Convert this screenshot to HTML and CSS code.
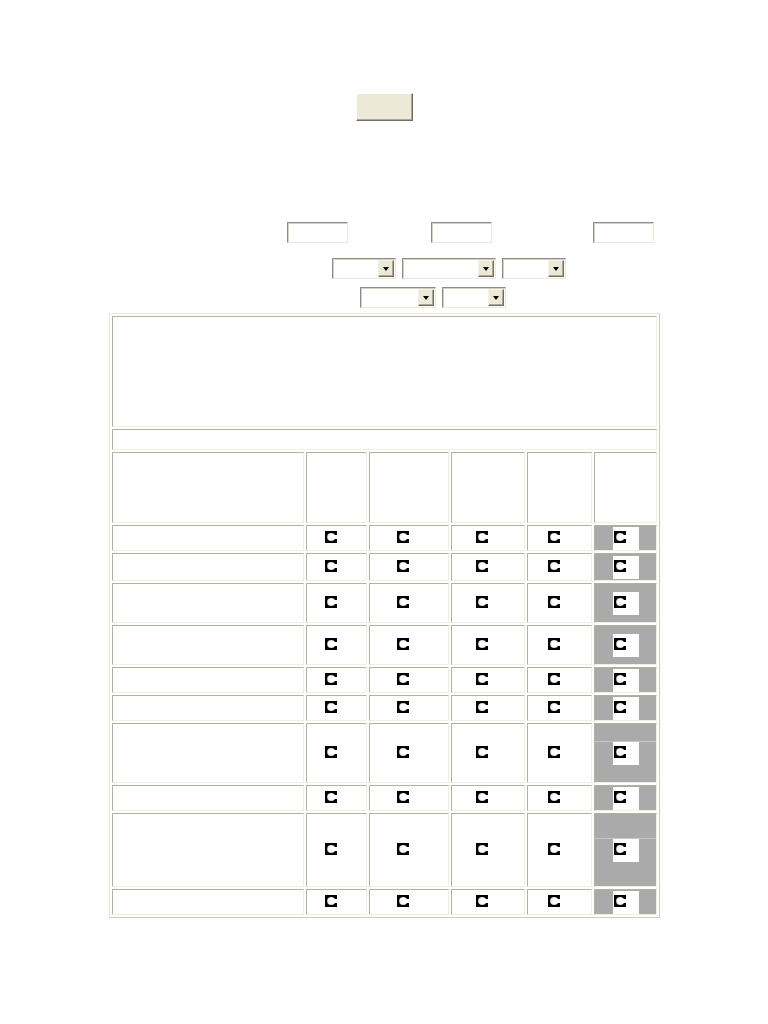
FILE: index.html
```html
<!DOCTYPE html>
<html>
<head>
<meta charset="utf-8">
<title>Form</title>
<link rel="stylesheet" href="styles.css">
</head>
<body>
<svg class="defs" width="0" height="0" aria-hidden="true">
  <defs>
    <symbol id="radio" viewBox="0 0 12 12">
      <rect width="12" height="12" fill="#000"/>
      <circle cx="6.2" cy="6" r="4.1" fill="#d8d8d8"/>
      <circle cx="6.4" cy="6" r="3.3" fill="#fff"/>
      <rect x="9" y="4" width="3" height="4" fill="#fff"/>
    </symbol>
  </defs>
</svg>

<div class="btn-row"><button class="btn" type="button"></button></div>

<div class="input-row">
  <span class="field"></span>
  <span class="field f2"></span>
  <span class="field f3"></span>
</div>

<div class="sel-row r1">
  <span class="sel w64"><span class="drop"><span class="tri"></span></span></span>
  <span class="sel w94"><span class="drop"><span class="tri"></span></span></span>
  <span class="sel w64"><span class="drop"><span class="tri"></span></span></span>
</div>
<div class="sel-row r2">
  <span class="sel w76"><span class="drop"><span class="tri"></span></span></span>
  <span class="sel w64"><span class="drop"><span class="tri"></span></span></span>
</div>

<table class="grid">
  <tr class="h111"><td colspan="6"></td></tr>
  <tr class="h21"><td colspan="6"></td></tr>
  <tr class="h71">
    <td class="c1"></td><td class="c2"></td><td class="c3"></td><td class="c4"></td><td class="c5"></td><td class="c6"></td>
  </tr>
  <tr class="h26">
    <td></td>
    <td><div class="rb"><svg class="rd"><use href="#radio"/></svg></div></td>
    <td><div class="rb"><svg class="rd"><use href="#radio"/></svg></div></td>
    <td><div class="rb"><svg class="rd"><use href="#radio"/></svg></div></td>
    <td><div class="rb"><svg class="rd"><use href="#radio"/></svg></div></td>
    <td class="gray"><div class="rb"><svg class="rd"><use href="#radio"/></svg></div></td>
  </tr>
  <tr class="h28">
    <td></td>
    <td><div class="rb"><svg class="rd"><use href="#radio"/></svg></div></td>
    <td><div class="rb"><svg class="rd"><use href="#radio"/></svg></div></td>
    <td><div class="rb"><svg class="rd"><use href="#radio"/></svg></div></td>
    <td><div class="rb"><svg class="rd"><use href="#radio"/></svg></div></td>
    <td class="gray"><div class="rb"><svg class="rd"><use href="#radio"/></svg></div></td>
  </tr>
  <tr class="h40">
    <td></td>
    <td><div class="rb"><svg class="rd"><use href="#radio"/></svg></div></td>
    <td><div class="rb"><svg class="rd"><use href="#radio"/></svg></div></td>
    <td><div class="rb"><svg class="rd"><use href="#radio"/></svg></div></td>
    <td><div class="rb"><svg class="rd"><use href="#radio"/></svg></div></td>
    <td class="gray"><div class="rb"><svg class="rd"><use href="#radio"/></svg></div></td>
  </tr>
  <tr class="h40">
    <td></td>
    <td><div class="rb"><svg class="rd"><use href="#radio"/></svg></div></td>
    <td><div class="rb"><svg class="rd"><use href="#radio"/></svg></div></td>
    <td><div class="rb"><svg class="rd"><use href="#radio"/></svg></div></td>
    <td><div class="rb"><svg class="rd"><use href="#radio"/></svg></div></td>
    <td class="gray"><div class="rb"><svg class="rd"><use href="#radio"/></svg></div></td>
  </tr>
  <tr class="h26">
    <td></td>
    <td><div class="rb"><svg class="rd"><use href="#radio"/></svg></div></td>
    <td><div class="rb"><svg class="rd"><use href="#radio"/></svg></div></td>
    <td><div class="rb"><svg class="rd"><use href="#radio"/></svg></div></td>
    <td><div class="rb"><svg class="rd"><use href="#radio"/></svg></div></td>
    <td class="gray"><div class="rb"><svg class="rd"><use href="#radio"/></svg></div></td>
  </tr>
  <tr class="h26">
    <td></td>
    <td><div class="rb"><svg class="rd"><use href="#radio"/></svg></div></td>
    <td><div class="rb"><svg class="rd"><use href="#radio"/></svg></div></td>
    <td><div class="rb"><svg class="rd"><use href="#radio"/></svg></div></td>
    <td><div class="rb"><svg class="rd"><use href="#radio"/></svg></div></td>
    <td class="gray"><div class="rb"><svg class="rd"><use href="#radio"/></svg></div></td>
  </tr>
  <tr class="h60">
    <td></td>
    <td><div class="rb"><svg class="rd"><use href="#radio"/></svg></div></td>
    <td><div class="rb"><svg class="rd"><use href="#radio"/></svg></div></td>
    <td><div class="rb"><svg class="rd"><use href="#radio"/></svg></div></td>
    <td><div class="rb"><svg class="rd"><use href="#radio"/></svg></div></td>
    <td class="gray"><div class="line"><div class="rb"><svg class="rd"><use href="#radio"/></svg></div></div></td>
  </tr>
  <tr class="h26">
    <td></td>
    <td><div class="rb"><svg class="rd"><use href="#radio"/></svg></div></td>
    <td><div class="rb"><svg class="rd"><use href="#radio"/></svg></div></td>
    <td><div class="rb"><svg class="rd"><use href="#radio"/></svg></div></td>
    <td><div class="rb"><svg class="rd"><use href="#radio"/></svg></div></td>
    <td class="gray"><div class="rb"><svg class="rd"><use href="#radio"/></svg></div></td>
  </tr>
  <tr class="h74">
    <td></td>
    <td><div class="rb"><svg class="rd"><use href="#radio"/></svg></div></td>
    <td><div class="rb"><svg class="rd"><use href="#radio"/></svg></div></td>
    <td><div class="rb"><svg class="rd"><use href="#radio"/></svg></div></td>
    <td><div class="rb"><svg class="rd"><use href="#radio"/></svg></div></td>
    <td class="gray"><div class="line"><div class="rb"><svg class="rd"><use href="#radio"/></svg></div></div></td>
  </tr>
  <tr class="h26">
    <td></td>
    <td><div class="rb"><svg class="rd"><use href="#radio"/></svg></div></td>
    <td><div class="rb"><svg class="rd"><use href="#radio"/></svg></div></td>
    <td><div class="rb"><svg class="rd"><use href="#radio"/></svg></div></td>
    <td><div class="rb"><svg class="rd"><use href="#radio"/></svg></div></td>
    <td class="gray"><div class="rb"><svg class="rd"><use href="#radio"/></svg></div></td>
  </tr>
</table>
</body>
</html>
```

FILE: styles.css
```css
html, body {
  background: #ffffff;
}
body {
  margin: 8px;
  font-family: "Liberation Sans", Arial, sans-serif;
  font-size: 13px;
}
.defs {
  position: absolute;
  width: 0;
  height: 0;
  overflow: hidden;
}

.btn-row {
  display: flex;
  justify-content: center;
  padding-top: 85px;
}
.btn {
  width: 57px;
  height: 28px;
  margin: 0;
  padding: 0;
  background: #ece9d8;
  border: 1px solid;
  border-color: #ffffff #716f64 #716f64 #ffffff;
  box-shadow: inset -1px -1px 0 #aca899;
  display: block;
}

.input-row {
  display: flex;
  margin-top: 101px;
  padding-left: 279px;
}
.field {
  display: block;
  box-sizing: border-box;
  width: 61px;
  height: 21px;
  background: #fff;
  border: 1px solid;
  border-color: #8e8d85 #ece9d8 #ece9d8 #8e8d85;
  box-shadow: inset 1px 1px 0 #d4d0c8;
}
.f2 { margin-left: 83px; }
.f3 { margin-left: 101px; }

.sel-row {
  display: flex;
  gap: 6px;
}
.sel-row.r1 {
  margin-top: 15px;
  padding-left: 324px;
}
.sel-row.r2 {
  margin-top: 8px;
  padding-left: 352px;
}
.sel {
  display: flex;
  justify-content: flex-end;
  box-sizing: border-box;
  height: 21px;
  padding: 1px;
  background: #fff;
  border: 1px solid;
  border-color: #8e8d85 #ece9d8 #ece9d8 #8e8d85;
  box-shadow: inset 1px 1px 0 #d4d0c8;
}
.w64 { width: 64px; }
.w76 { width: 76px; }
.w94 { width: 94px; }
.drop {
  display: flex;
  align-items: center;
  justify-content: center;
  box-sizing: border-box;
  width: 16px;
  height: 17px;
  background: #ece9d8;
  border: 1px solid;
  border-color: #f4f2e8 #716f64 #716f64 #f4f2e8;
  box-shadow: inset -1px -1px 0 #aca899;
}
.tri {
  width: 0;
  height: 0;
  border-left: 3.5px solid transparent;
  border-right: 3.5px solid transparent;
  border-top: 4px solid #000;
  margin-top: 1px;
}

.grid {
  margin-top: 5px;
  margin-left: 101px;
  width: 551px;
  border-collapse: separate;
  border-spacing: 2px;
  border: 1px solid;
  border-color: #ece9d8 #cfccbd #cfccbd #ece9d8;
}
.grid td {
  box-sizing: border-box;
  padding: 0;
  border: 1px solid;
  border-color: #b4b1a3 #f1efe2 #f1efe2 #b4b1a3;
  vertical-align: middle;
}
.grid .c1 { width: 192px; }
.grid .c2 { width: 61px; }
.grid .c3 { width: 80px; }
.grid .c4 { width: 74px; }
.grid .c5 { width: 65px; }
.grid .c6 { width: 63px; }

.h111 td { height: 111px; }
.h21 td { height: 21px; }
.h71 td { height: 71px; }
.h26 td { height: 26px; }
.h28 td { height: 28px; }
.h40 td { height: 40px; }
.h60 td { height: 60px; }
.h74 td { height: 74px; }

.grid td.gray {
  background: #aaaaaa;
}
.rb {
  box-sizing: border-box;
  width: 26px;
  height: 23px;
  margin: 0 auto;
  padding: 4px 0 0 1px;
  background: #fff;
}
.rd {
  display: block;
  width: 12px;
  height: 12px;
}
.line {
  border-top: 1px solid #c6c6c6;
  margin-top: -1px;
}
```
